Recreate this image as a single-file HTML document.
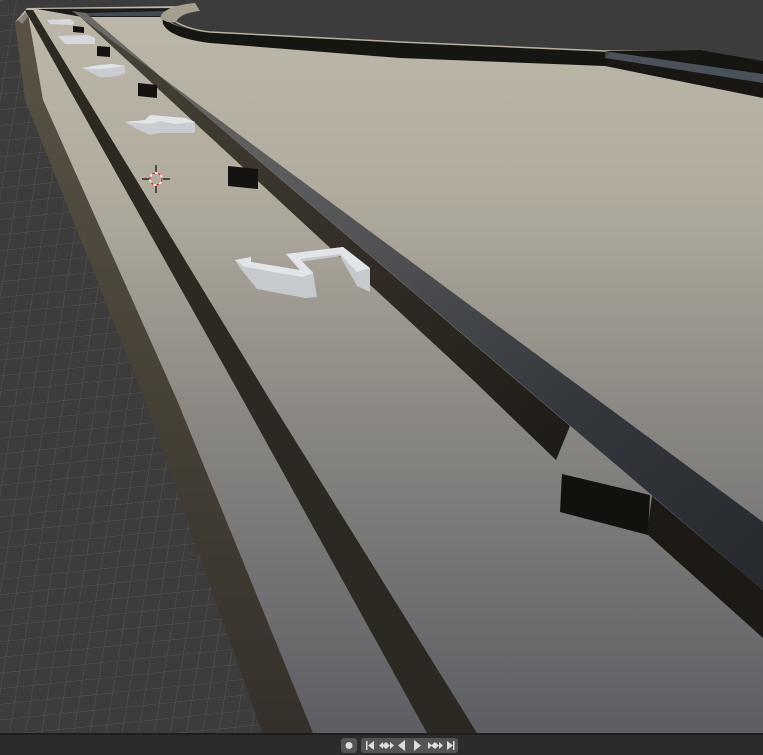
<!DOCTYPE html>
<html><head><meta charset="utf-8"><style>
html,body{margin:0;padding:0;background:#3d3d3d;overflow:hidden}
svg{display:block}
</style></head><body>
<svg width="763" height="755" viewBox="0 0 763 755" xmlns="http://www.w3.org/2000/svg">
<defs>
<linearGradient id="fl" x1="0" y1="0" x2="0" y2="1">
<stop offset="0" stop-color="#bdb7aa"/><stop offset="0.25" stop-color="#b2ac9f"/><stop offset="0.55" stop-color="#8c8984"/><stop offset="1" stop-color="#5d5e64"/></linearGradient>
<linearGradient id="wt" x1="0" y1="0" x2="1" y2="1">
<stop offset="0" stop-color="#6e6c67"/><stop offset="0.35" stop-color="#57585a"/><stop offset="0.7" stop-color="#34383d"/><stop offset="1" stop-color="#262a2f"/></linearGradient>
<linearGradient id="ws" x1="0" y1="0" x2="1" y2="1">
<stop offset="0" stop-color="#4a443a"/><stop offset="1" stop-color="#1e1b16"/></linearGradient>
<linearGradient id="br" x1="0" y1="0" x2="0" y2="1">
<stop offset="0" stop-color="#5a5346"/><stop offset="1" stop-color="#35302a"/></linearGradient>
<pattern id="g" width="16" height="16" patternUnits="userSpaceOnUse" patternTransform="skewX(-15) rotate(-6)">
<path d="M16 0H0V16" fill="none" stroke="#555" stroke-width="1"/></pattern>
</defs>
<rect width="763" height="755" fill="#3c3c3c"/>
<polygon points="0,0 20,0 270,733 0,733" fill="url(#g)"/>
<polygon points="15,22 27,8 190,6 165,20 210,40 400,52 605,62 763,90 763,733 262,733" fill="url(#fl)"/>
<polygon points="15,22 25,100 145,400 262,733 313,733 177,400 43,100 28,14" fill="url(#br)"/>
<polygon points="18,20 28,10 32,12 22,24" fill="#8a8476"/>
<polygon points="25,10 243,400 427,733 477,733 270,400 33,10" fill="#2c2822"/>
<polygon points="37,9 178,8 170,17 82,17" fill="#1b1b19"/>
<polygon points="86,13 166,11 162,16 90,16" fill="#434a56"/>
<path d="M162,16 Q170,28 210,32 L400,42 L605,51 L605,66 L400,58 L210,43 Q170,38 163,24 Z" fill="#151511"/>
<path d="M160,18 Q163,6 195,3 L200,11 Q180,13 176,22 Q168,24 160,18 Z" fill="#a59f8f"/>
<path d="M176,22 Q190,30 210,32 L400,42 L605,51 L700,51 L763,62" fill="none" stroke="#b8b1a1" stroke-width="1.5"/>
<polygon points="605,51 700,50 763,61 763,75 610,52" fill="#151511"/>
<polygon points="610,52 763,74 763,83 605,58" fill="#4b5159"/>
<polygon points="605,58 763,83 763,98 605,66" fill="#191713"/>
<polygon points="76,13 88,24 473,380 556,460 570,426 86,13" fill="url(#ws)"/>
<polygon points="562,474 650,495 648,535 560,512" fill="#12110e"/>
<polygon points="652,496 763,590 763,638 647,534" fill="#1d1a15"/>
<polygon points="72,11 763,522 763,590 86,13" fill="url(#wt)"/>
<polygon points="73,26 84,27 84,33 73,32" fill="#141311"/>
<polygon points="97,46 110,47 110,57 97,56" fill="#141311"/>
<polygon points="138,83 157,85 157,98 138,96" fill="#141311"/>
<polygon points="228,166 258,169 258,189 228,186" fill="#141311"/>
<polygon points="47,20 70,19 75,22 72,25 50,24" fill="#d5d8dc"/>
<polygon points="58,36 88,35 95,38 95,44 65,44" fill="#d5d8dc"/>
<polygon points="82,68 100,65 112,64 125,66 125,74 110,77 100,77 90,72" fill="#c9ccd0"/>
<polygon points="82,68 100,65 112,64 125,66 110,68 98,69" fill="#e2e5e8"/>
<polygon points="125,122 145,120 150,115 185,118 195,122 195,133 160,133 150,135 135,128" fill="#c9ccd0"/>
<polygon points="125,122 145,120 150,115 185,118 195,122 175,124 160,121 150,124" fill="#e2e5e8"/>
<polygon points="235,260 251,257 251,262 300,270 286,254 343,247 370,268 370,292 357,286 340,256 300,262 313,272 317,297 305,298 257,289 240,268" fill="#c6cacd"/>
<polygon points="235,260 251,257 251,262 300,270 286,254 343,247 370,268 357,272 340,254 300,259 313,273 302,277 245,267" fill="#e2e5e8"/>
<g transform="translate(156,179)">
<circle r="6" fill="none" stroke="#fff" stroke-width="1.5"/>
<circle r="6" fill="none" stroke="#d33" stroke-width="1.5" stroke-dasharray="3 3"/>
<path d="M-14,0H-7M7,0H14M0,-14V-7M0,7V14" stroke="#111" stroke-width="1.2"/>
</g>
<rect x="0" y="733" width="763" height="22" fill="#2b2b2b"/>
<rect x="0" y="733" width="763" height="2" fill="#1e1e1e"/>
<rect x="341" y="738" width="16" height="15" rx="3" fill="#545454"/>
<circle cx="349" cy="745.5" r="3.5" fill="#ddd"/>
<rect x="361" y="738" width="97" height="15" rx="3" fill="#545454"/>
<g fill="#ddd">
<rect x="366" y="741" width="1.5" height="9"/><polygon points="374,741 374,750 368,745.5"/>
<polygon points="383,742 383,749 379,745.5"/><polygon points="386,742 390,745.5 386,749 382,745.5"/><polygon points="390,742 394,745.5 390,749"/>
<polygon points="405,740 405,751 398,745.5"/>
<polygon points="414,740 414,751 421,745.5"/>
<polygon points="428,742 428,749 432,745.5"/><polygon points="435,742 439,745.5 435,749 431,745.5"/><polygon points="439,742 443,745.5 439,749"/>
<polygon points="447,741 447,750 453,745.5"/><rect x="453" y="741" width="1.5" height="9"/>
</g>
</svg>
</body></html>
